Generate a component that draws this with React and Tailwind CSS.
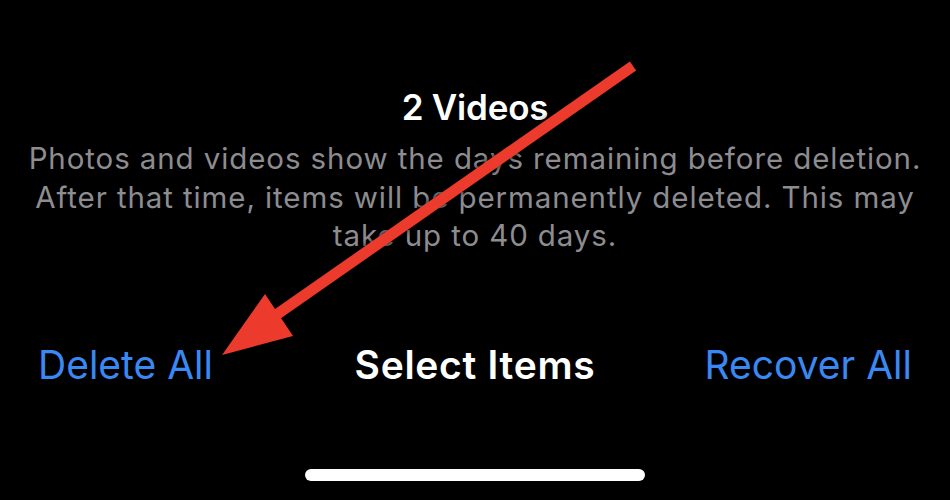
import React from "react";

export default function App() {
  return (
    <div
      className="relative w-[950px] h-[500px] bg-black overflow-hidden flex flex-col items-center"
      style={{ fontFamily: "Inter, 'Noto Sans', sans-serif" }}
    >
      <div className="pt-[87px] text-white font-semibold text-[35px] leading-[40px] tracking-[-0.2px]">
        2 Videos
      </div>
      <p className="mt-[12px] w-[940px] text-center text-[#8d8d91] text-[29.5px] leading-[38.5px] tracking-[0.9px]">
        Photos and videos show the days remaining before deletion.
        <br />
        After that time, items will be permanently deleted. This may
        <br />
        take up to 40 days.
      </p>
      <div className="mt-[86px] w-full px-[38px] grid grid-cols-[1fr_auto_1fr] items-center text-[39px] leading-[48px]">
        <span className="justify-self-start text-[#3a88f3] tracking-[0px]">Delete All</span>
        <span className="text-white font-semibold tracking-[0.7px]">Select Items</span>
        <span className="justify-self-end text-[#3a88f3] tracking-[0px]">Recover All</span>
      </div>
      <div className="mt-auto mb-[19px] w-[340px] h-[12px] rounded-full bg-white" />

      <svg
        className="absolute left-0 top-0 pointer-events-none"
        width="950"
        height="500"
        viewBox="0 0 950 500"
        style={{ filter: "drop-shadow(0 0 3px rgba(0,0,0,0.9))" }}
      >
        <line x1="633" y1="66" x2="276" y2="315" stroke="#ec3a2c" strokeWidth="11" strokeLinecap="butt" />
        <polygon points="222,355 265,294 293,336" fill="#ec3a2c" />
      </svg>
    </div>
  );
}
